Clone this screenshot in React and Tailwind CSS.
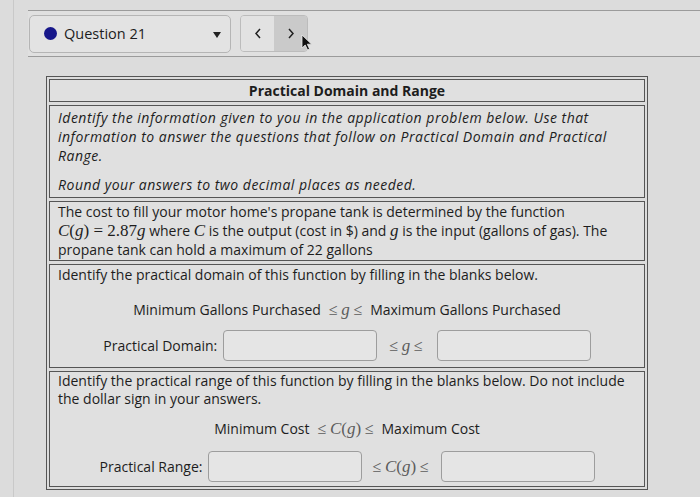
import React from 'react';

const M = ({ children }) => (
  <span className="font-['Liberation_Serif',serif] italic text-[17px]">{children}</span>
);

const S = ({ children }) => (
  <span className="font-['Liberation_Serif',serif] text-[17px]">{children}</span>
);

const Le = () => <span className="font-['Liberation_Serif',serif] text-[16px]">≤</span>;

const Box = ({ className = '' }) => (
  <div className={`h-[31px] w-[154px] rounded-[4px] border border-[#9d9d9d] bg-[#e5e5e5] ${className}`} />
);

const Cell = ({ className = '', children }) => (
  <div className={`border border-[#555] bg-[#e0e0e0] ${className}`}>{children}</div>
);

const Cg = () => (
  <>
    <M>C</M>
    <S>(</S>
    <M>g</M>
    <S>)</S>
  </>
);

const Cursor = () => (
  <svg width="12" height="17" viewBox="0 0 12 17" className="absolute left-[301px] top-[34px]">
    <path d="M1 1 L1 14 L4.2 11 L6.6 16 L8.6 15 L6.3 10.2 L10.6 10.2 Z" fill="#111" stroke="#eee" strokeWidth="0.8" />
  </svg>
);

export default function App() {
  return (
    <div className="relative h-[497px] w-[700px] overflow-hidden bg-[#dcdcdc] font-['Open_Sans',sans-serif] text-[14px] text-[#1d1d1d]">
      <div className="absolute left-[13px] top-0 h-full w-px bg-[#c9c9c9]" />

      {/* question nav bar */}
      <div className="ml-[28px] mt-[10px] flex h-[47px] items-center gap-[9px] border-y border-[#9b9b9b] bg-[#e0e0e0] pl-px">
        <div className="flex h-[38px] w-[202px] items-center rounded-[5px] border border-[#b5b5b5] bg-[#e3e3e3] pl-[14px] pr-[9px]">
          <span className="h-[13px] w-[13px] rounded-full bg-[#17178a]" />
          <span className="ml-[7px] text-[14.5px]">Question 21</span>
          <span className="ml-auto mt-[3px] h-0 w-0 border-x-[4px] border-t-[6px] border-x-transparent border-t-[#222]" />
        </div>
        <div className="flex h-[37px] w-[68px] overflow-hidden rounded-[4px] border border-[#bcbcbc]">
          <div className="flex flex-1 items-center justify-center bg-[#e2e2e2]">
            <svg width="8" height="11" viewBox="0 0 8 11"><path d="M6 1 L2 5.5 L6 10" fill="none" stroke="#222" strokeWidth="1.5" /></svg>
          </div>
          <div className="flex flex-1 items-center justify-center bg-[#cacaca]">
            <svg width="8" height="11" viewBox="0 0 8 11"><path d="M2 1 L6 5.5 L2 10" fill="none" stroke="#222" strokeWidth="1.5" /></svg>
          </div>
        </div>
      </div>
      <Cursor />

      {/* table */}
      <div className="ml-[46px] mt-[19px] flex w-[602px] flex-col gap-[3px] border border-[#555] p-[2px]">
        <Cell className="flex h-[23px] items-center justify-center">
          <span className="font-bold">Practical Domain and Range</span>
        </Cell>

        <Cell className="h-[93px] whitespace-nowrap px-[8px] pt-[2px] italic leading-[19px] tracking-[0.5px]">
          <div>Identify the information given to you in the application problem below. Use that</div>
          <div>information to answer the questions that follow on Practical Domain and Practical</div>
          <div>Range.</div>
          <div className="mt-[10px]">Round your answers to two decimal places as needed.</div>
        </Cell>

        <Cell className="h-[60px] whitespace-nowrap px-[8px] pt-px leading-[18px]">
          <div>The cost to fill your motor home's propane tank is determined by the function</div>
          <div className="leading-[20px]">
            <Cg />
            <S> = 2.87</S>
            <M>g</M> where <M>C</M> is the output (cost in $) and <M>g</M> is the input (gallons of gas). The
          </div>
          <div>propane tank can hold a maximum of 22 gallons</div>
        </Cell>

        <Cell className="h-[104px] px-[8px] pt-px">
          <div className="leading-[18px]">Identify the practical domain of this function by filling in the blanks below.</div>
          <div className="mt-[16px] flex h-[20px] items-center justify-center gap-[8px] leading-[20px]">
            <span>Minimum Gallons Purchased</span>
            <span className="text-[#5c5c5c]"><Le /> <M>g</M> <Le /></span>
            <span>Maximum Gallons Purchased</span>
          </div>
          <div className="mt-[10px] flex h-[31px] items-center justify-center leading-[20px]">
            <span>Practical Domain:</span>
            <Box className="ml-[6px]" />
            <span className="ml-[12px] mr-[14px] text-[#5c5c5c]"><Le /> <M>g</M> <Le /></span>
            <Box />
          </div>
        </Cell>

        <Cell className="h-[116px] px-[8px]">
          <div className="leading-[18px]">
            Identify the practical range of this function by filling in the blanks below. Do not include
            <br />
            the dollar sign in your answers.
          </div>
          <div className="mt-[11px] flex h-[20px] items-center justify-center gap-[8px] leading-[20px]">
            <span>Minimum Cost</span>
            <span className="text-[#5c5c5c]"><Le /> <Cg /> <Le /></span>
            <span>Maximum Cost</span>
          </div>
          <div className="mt-[12px] flex h-[31px] items-center justify-center leading-[20px]">
            <span>Practical Range:</span>
            <Box className="ml-[6px]" />
            <span className="ml-[10px] mr-[12px] text-[#5c5c5c]"><Le /> <Cg /> <Le /></span>
            <Box />
          </div>
        </Cell>
      </div>
    </div>
  );
}
